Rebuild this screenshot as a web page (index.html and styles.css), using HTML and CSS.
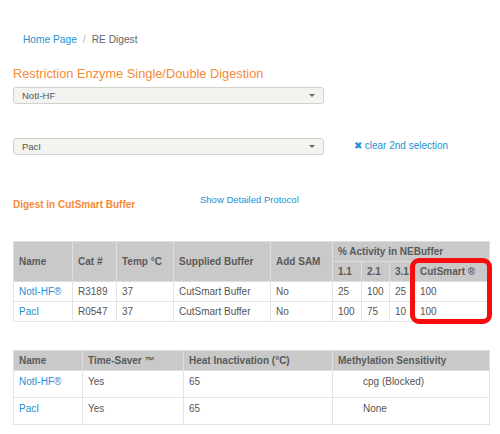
FILE: index.html
```html
<!DOCTYPE html>
<html>
<head>
<meta charset="utf-8">
<link rel="stylesheet" href="styles.css">
</head>
<body>
<div class="page">
  <div class="crumbs"><a class="link">Home Page</a><span class="sep">/</span><span class="cur">RE Digest</span></div>
  <h1 class="title">Restriction Enzyme Single/Double Digestion</h1>
  <div class="sel-row">
    <div class="select"><span>NotI-HF</span><span class="caret"></span></div>
  </div>
  <div class="sel-row second">
    <div class="select"><span>PacI</span><span class="caret"></span></div>
    <a class="link clear"><span class="x">&#10006;</span> clear 2nd selection</a>
  </div>
  <div class="digest-row">
    <span class="digest">Digest in CutSmart Buffer</span>
    <a class="link protocol">Show Detailed Protocol</a>
  </div>
  <div class="t1wrap">
    <table class="t1">
      <colgroup>
        <col style="width:59px"><col style="width:44px"><col style="width:57px"><col style="width:97px"><col style="width:62px"><col style="width:29px"><col style="width:28px"><col style="width:25px"><col>
      </colgroup>
      <thead>
        <tr><th rowspan="2">Name</th><th rowspan="2">Cat #</th><th rowspan="2">Temp °C</th><th rowspan="2">Supplied Buffer</th><th rowspan="2">Add SAM</th><th colspan="4">% Activity in NEBuffer</th></tr>
        <tr><th>1.1</th><th>2.1</th><th>3.1</th><th>CutSmart ®</th></tr>
      </thead>
      <tbody>
        <tr><td><a class="link">NotI-HF®</a></td><td>R3189</td><td>37</td><td>CutSmart Buffer</td><td>No</td><td>25</td><td>100</td><td>25</td><td>100</td></tr>
        <tr><td><a class="link">PacI</a></td><td>R0547</td><td>37</td><td>CutSmart Buffer</td><td>No</td><td>100</td><td>75</td><td>10</td><td>100</td></tr>
      </tbody>
    </table>
    <div class="highlight"></div>
  </div>
  <table class="t2">
    <colgroup><col style="width:69px"><col style="width:101px"><col style="width:149px"><col></colgroup>
    <thead><tr><th>Name</th><th>Time-Saver ™</th><th>Heat Inactivation (°C)</th><th>Methylation Sensitivity</th></tr></thead>
    <tbody>
      <tr><td><a class="link">NotI-HF®</a></td><td>Yes</td><td>65</td><td class="meth">cpg (Blocked)</td></tr>
      <tr><td><a class="link">PacI</a></td><td>Yes</td><td>65</td><td class="meth">None</td></tr>
    </tbody>
  </table>
</div>
</body>
</html>
```
FILE: styles.css
```css
html, body { margin: 0; padding: 0; background: #fff; }
body { font-family: "Liberation Sans", Arial, sans-serif; color: #555; font-size: 10px; }
.page { padding: 33px 10px 0 13px; width: 477px; }
.link { color: #2490d3; text-decoration: none; }
.crumbs { font-size: 10.2px; padding-left: 10px; height: 14px; line-height: 14px; }
.crumbs .sep { color: #bbb; margin: 0 6px 0 6px; }
.crumbs .cur { color: #666; }
.title { font-weight: normal; color: #f58a35; font-size: 12.8px; margin: 19px 0 0 0; height: 16px; line-height: 16px; }
.sel-row { display: flex; align-items: center; margin-top: 5px; height: 17px; }
.sel-row.second { margin-top: 34px; }
.select { box-sizing: border-box; width: 311px; height: 17px; border: 1px solid #d2d2cc; border-radius: 3px; background: #f3f3ef; display: flex; align-items: center; justify-content: space-between; padding: 0 8px 0 8px; font-size: 9.5px; color: #555; }
.caret { width: 0; height: 0; border-left: 3px solid transparent; border-right: 3px solid transparent; border-top: 3px solid #666; }
.clear { margin-left: 30px; font-size: 10px; margin-top: -2px; }
.clear .x { font-size: 10px; }
.digest-row { display: flex; align-items: center; margin-top: 36px; height: 20px; }
.digest { color: #f58a35; font-weight: bold; font-size: 10px; width: 187px; margin-top: 6px; }
.protocol { font-size: 9.5px; margin-top: -4px; }
.t1wrap { position: relative; margin-top: 30px; width: 477px; }
table { border-collapse: collapse; width: 477px; table-layout: fixed; }
th, td { border: 1px solid #e3e3e3; text-align: left; padding: 0 0 0 5px; font-size: 10px; white-space: nowrap; overflow: hidden; }
th { background: #c9c9c9; color: #5a5a5a; font-weight: bold; border-color: #dedede; }
.t1 thead tr { height: 20px; }
.t1 tbody tr { height: 20px; }
.t2 { margin-top: 28px; }
.t2 thead tr { height: 20px; }
.t2 tbody tr { height: 27px; }
.t2 td { vertical-align: top; padding-top: 5px; }
.t2 td.meth { padding-left: 30px; }
.highlight { position: absolute; left: 397px; top: 17px; width: 82px; height: 66px; box-sizing: border-box; border: 5px solid #f70d0d; border-radius: 9px; }
```
